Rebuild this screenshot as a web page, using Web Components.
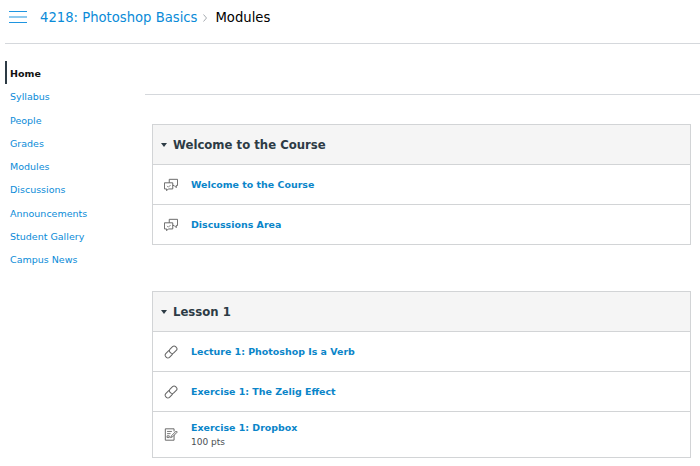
<!DOCTYPE html>
<html>
<head>
<meta charset="utf-8">
<title>Modules</title>
<style>
html, body { margin: 0; padding: 0; background: #fff; overflow: hidden; }
body { width: 700px; height: 466px; font-family: "DejaVu Sans", sans-serif; }
.layout { display: flex; }
</style>
</head>
<body>
<course-header course="4218: Photoshop Basics" page="Modules"></course-header>
<div class="layout">
    <course-nav>
        <nav-link active>Home</nav-link>
        <nav-link>Syllabus</nav-link>
        <nav-link>People</nav-link>
        <nav-link>Grades</nav-link>
        <nav-link>Modules</nav-link>
        <nav-link>Discussions</nav-link>
        <nav-link>Announcements</nav-link>
        <nav-link>Student Gallery</nav-link>
        <nav-link>Campus News</nav-link>
    </course-nav>
    <modules-page>
        <module-group title="Welcome to the Course">
            <module-item icon="discussion">Welcome to the Course</module-item>
            <module-item icon="discussion">Discussions Area</module-item>
        </module-group>
        <module-group title="Lesson 1">
            <module-item icon="link">Lecture 1: Photoshop Is a Verb</module-item>
            <module-item icon="link">Exercise 1: The Zelig Effect</module-item>
            <module-item icon="assignment" points="100 pts">Exercise 1: Dropbox</module-item>
        </module-group>
    </modules-page>
</div>

<script>
const icons = {
    discussion: `<svg width="14" height="14" viewBox="0 0 16 16" fill="none" stroke="#666" stroke-width="1.100">
        <path d="M.5 5.500h9.500v7h-5l-2 2v-2h-2.500z" fill="#fff"/>
        <path d="M6 5.500v-4h9.500v7h-1.500v2.500l-2.500-2.500h-1.500"/>
        <path d="M3.500 9l1.500 1.500 2.500-2.500" stroke-width=".9"/>
    </svg>`,
    link: `<svg width="14" height="14" viewBox="0 0 16 16" fill="none" stroke="#666" stroke-width="1.200">
        <g transform="rotate(-45 8 8)">
            <rect x="0" y="5" width="9" height="6" rx="2.500"/>
            <rect x="7" y="5" width="9" height="6" rx="2.500" fill="#fff"/>
        </g>
    </svg>`,
    assignment: `<svg width="14" height="15" viewBox="0 0 16 16" fill="none" stroke="#666" stroke-width="1.100">
        <path d="M11.500 8v6.500h-10v-13h10v3"/>
        <path d="M3.500 4.500h5.500M3.500 7h4M3.500 9.500h2.500v2h-2.500z" stroke-width="1"/>
        <path d="M7.500 11.500l1 -2 5.500-5.500 1.200 1.200-5.500 5.500z" fill="#fff"/>
    </svg>`
};

class courseHeader extends HTMLElement {
    constructor() {
        super();
        this.attachShadow({ mode: "open" });
    }
    connectedCallback() {
        this.shadowRoot.innerHTML = `
        <style>
            :host{
                display: block;
                height: 43px;
                margin-left: 5px;
                border-bottom: 1px solid #d5d8dc;
            }
            .bar{
                display: flex;
                align-items: center;
                height: 34px;
                padding-left: 4px;
                font-size: 13.2px;
                color: #000;
            }
            .burger{
                margin-right: 13px;
            }
            .course{
                color: #0a8bd8;
            }
            .sep{
                margin: 2px 8px 0 6px;
            }
        </style>
        <div class="bar">
            <svg class="burger" width="18" height="14" viewBox="0 0 18 14" fill="none" stroke="#1f95e0" stroke-width="1.200">
                <path d="M0 1.500h18M0 7h18M0 12.500h18"/>
            </svg>
            <span class="course">${this.getAttribute("course")}</span>
            <svg class="sep" width="4" height="8" viewBox="0 0 4 8" fill="none" stroke="#a6abb0" stroke-width="1">
                <path d="M.5 .5l3 3.500-3 3.500"/>
            </svg>
            <span>${this.getAttribute("page")}</span>
        </div>
        `;
    }
}
customElements.define("course-header", courseHeader);

class courseNav extends HTMLElement {
    constructor() {
        super();
        this.attachShadow({ mode: "open" });
        this.shadowRoot.innerHTML = `
        <style>
            :host{
                display: block;
                flex: 0 0 140px;
                margin-left: 5px;
                padding-top: 17px;
            }
        </style>
        <slot></slot>
        `;
    }
}
customElements.define("course-nav", courseNav);

class navLink extends HTMLElement {
    constructor() {
        super();
        this.attachShadow({ mode: "open" });
        this.shadowRoot.innerHTML = `
        <style>
            :host{
                display: block;
                height: 23.3px;
                line-height: 25px;
                padding-left: 5px;
                font-size: 9.5px;
                color: #0a8bd8;
                white-space: nowrap;
            }
            :host([active]){
                padding-left: 3px;
                border-left: 2px solid #2d3b45;
                font-weight: bold;
                color: #111;
            }
        </style>
        <slot></slot>
        `;
    }
}
customElements.define("nav-link", navLink);

class modulesPage extends HTMLElement {
    constructor() {
        super();
        this.attachShadow({ mode: "open" });
        this.shadowRoot.innerHTML = `
        <style>
            :host{
                display: block;
                flex: 1;
                min-width: 0;
            }
            .rule{
                height: 50px;
                border-bottom: 1px solid #d5d8dc;
            }
            .list{
                display: flex;
                flex-direction: column;
                gap: 46px;
                padding: 29px 9px 0 7px;
            }
        </style>
        <div class="rule"></div>
        <div class="list"><slot></slot></div>
        `;
    }
}
customElements.define("modules-page", modulesPage);

class moduleGroup extends HTMLElement {
    constructor() {
        super();
        this.attachShadow({ mode: "open" });
    }
    connectedCallback() {
        this.shadowRoot.innerHTML = `
        <style>
            :host{
                display: block;
                border: 1px solid #d2d4d6;
            }
            .head{
                display: flex;
                align-items: center;
                height: 39px;
                padding-left: 8px;
                background-color: #f5f5f5;
                font-size: 11.7px;
                font-weight: bold;
                color: #2d3b45;
            }
            .arrow{
                width: 0;
                height: 0;
                margin-right: 6px;
                border-left: 3px solid transparent;
                border-right: 3px solid transparent;
                border-top: 4px solid #2d3b45;
            }
        </style>
        <div class="head"><span class="arrow"></span>${this.getAttribute("title")}</div>
        <slot></slot>
        `;
    }
}
customElements.define("module-group", moduleGroup);

class moduleItem extends HTMLElement {
    constructor() {
        super();
        this.attachShadow({ mode: "open" });
    }
    connectedCallback() {
        const points = this.getAttribute("points");
        this.shadowRoot.innerHTML = `
        <style>
            :host{
                display: flex;
                align-items: center;
                min-height: 39px;
                border-top: 1px solid #d2d4d6;
            }
            :host([points]){
                min-height: 45px;
            }
            .icon{
                display: flex;
                flex: 0 0 38px;
                padding-left: 11px;
                box-sizing: border-box;
            }
            .title{
                font-size: 9.45px;
                font-weight: bold;
                color: #0a85c9;
                line-height: 14px;
            }
            .points{
                font-size: 9px;
                color: #4a4f54;
                line-height: 13px;
                margin-top: 1px;
            }
        </style>
        <span class="icon">${icons[this.getAttribute("icon")]}</span>
        <div>
            <div class="title"><slot></slot></div>
            ${points ? `<div class="points">${points}</div>` : ""}
        </div>
        `;
    }
}
customElements.define("module-item", moduleItem);
</script>
</body>
</html>
